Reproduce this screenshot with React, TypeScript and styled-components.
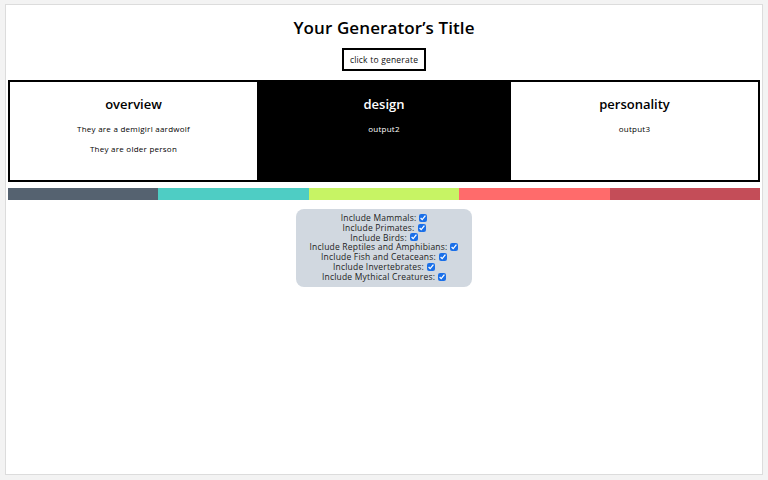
import React from "react";
import styled, { createGlobalStyle } from "styled-components";

const Global = createGlobalStyle`
  html, body { margin: 0; padding: 0; background: #f3f3f3; }
  body { font-family: "Open Sans", "Noto Sans", sans-serif; color: #000; }
`;

const Card = styled.div`
  margin: 4px 4px 4px 5px;
  width: 758px;
  height: 471px;
  box-sizing: border-box;
  background: #fff;
  border: 1px solid #dcdcdc;
  padding: 2px;
  display: flex;
  flex-direction: column;
  align-items: center;
`;

const Title = styled.h1`
  margin: 10px 0 0;
  font-size: 17px;
  font-weight: 600;
  line-height: 22px;
  letter-spacing: 0.1px;
`;

const GenButton = styled.button`
  margin-top: 9px;
  height: 23px;
  padding: 0 6px;
  background: #fff;
  border: 2px solid #000;
  font-family: "Open Sans", "Noto Sans", sans-serif;
  font-size: 8.5px;
  letter-spacing: 0.2px;
  color: #111;
  cursor: pointer;
`;

const Panels = styled.div`
  margin-top: 9px;
  width: 752px;
  height: 102px;
  box-sizing: border-box;
  border: 2px solid #000;
  display: grid;
  grid-template-columns: 247px 254px 1fr;
`;

const Panel = styled.section<{ $dark?: boolean }>`
  background: ${(p) => (p.$dark ? "#000" : "#fff")};
  color: ${(p) => (p.$dark ? "#fff" : "#000")};
  margin: ${(p) => (p.$dark ? "-2px 0" : "0")};
  padding-top: ${(p) => (p.$dark ? "15px" : "13px")};
  display: flex;
  flex-direction: column;
  align-items: center;
`;

const PanelHead = styled.h2`
  margin: 0 0 10px;
  font-size: 13px;
  font-weight: 600;
  line-height: 18px;
`;

const PanelText = styled.p`
  margin: 0 0 8px;
  font-size: 8px;
  line-height: 12px;
  letter-spacing: 0.25px;
  font-weight: 400;
`;

const ColorBar = styled.div`
  margin-top: 6px;
  width: 752px;
  height: 12px;
  display: grid;
  grid-template-columns: repeat(5, 1fr);
`;

const Swatch = styled.div<{ $c: string }>`
  background: ${(p) => p.$c};
`;

const Options = styled.div`
  margin-top: 9px;
  background: #d1d8e0;
  border-radius: 8px;
  padding: 4px 14px 5px;
  display: flex;
  flex-direction: column;
  align-items: center;
`;

const OptionRow = styled.label`
  font-size: 8.5px;
  line-height: 9.8px;
  color: #222;
  display: flex;
  align-items: center;
  gap: 3px;
  letter-spacing: 0.2px;
`;

const Check = styled.input`
  margin: 0;
  width: 8px;
  height: 8px;
  accent-color: #1a6fe8;
`;

const options = [
  "Mammals",
  "Primates",
  "Birds",
  "Reptiles and Amphibians",
  "Fish and Cetaceans",
  "Invertebrates",
  "Mythical Creatures",
];

const colors = ["#556270", "#4ecdc4", "#c7f464", "#ff6b6b", "#c44d58"];

export default function App() {
  return (
    <>
      <Global />
      <Card>
        <Title>Your Generator’s Title</Title>
        <GenButton>click to generate</GenButton>
        <Panels>
          <Panel>
            <PanelHead>overview</PanelHead>
            <PanelText>They are a demigirl aardwolf</PanelText>
            <PanelText>They are older person</PanelText>
          </Panel>
          <Panel $dark>
            <PanelHead>design</PanelHead>
            <PanelText>output2</PanelText>
          </Panel>
          <Panel>
            <PanelHead>personality</PanelHead>
            <PanelText>output3</PanelText>
          </Panel>
        </Panels>
        <ColorBar>
          {colors.map((c) => (
            <Swatch key={c} $c={c} />
          ))}
        </ColorBar>
        <Options>
          {options.map((o) => (
            <OptionRow key={o}>
              Include {o}: <Check type="checkbox" defaultChecked />
            </OptionRow>
          ))}
        </Options>
      </Card>
    </>
  );
}
